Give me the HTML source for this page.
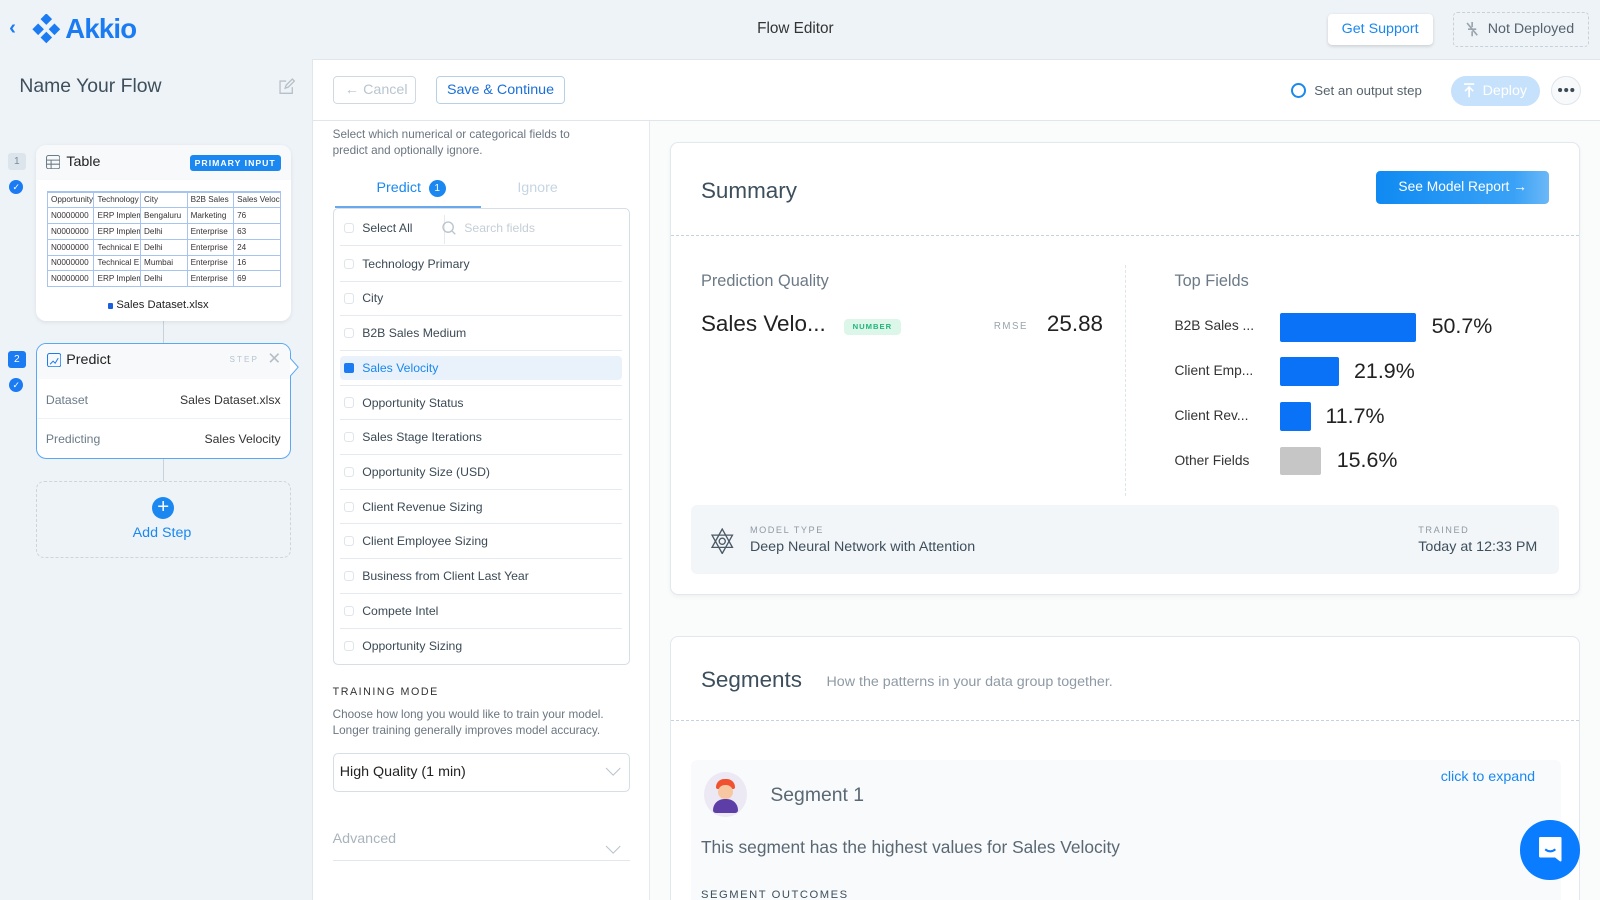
<!DOCTYPE html>
<html><head><meta charset="utf-8"><style>
*{box-sizing:border-box;margin:0;padding:0}
html,body{width:1600px;height:900px;overflow:hidden}
body{font-family:"Liberation Sans",sans-serif;background:#eef3f7;color:#3b4a55}
#w{zoom:1.0204;width:1568px;height:882px;position:relative;overflow:hidden}
.a{position:absolute}
.t{position:absolute;white-space:nowrap;line-height:1}
.row{position:absolute;left:6px;right:6px;height:34px;border-bottom:1px solid #e4eaf0;font-size:12px;color:#3b4a55;display:flex;align-items:center;padding-left:4px}
.cb{width:10px;height:10px;border:1px solid #dfe5ea;border-radius:3px;margin-right:8px}
.mt td{border-right:1px solid #a9c3ef;border-bottom:1px solid #a9c3ef;padding:0 3px;height:15.5px;font-size:8px;color:#333;white-space:nowrap;overflow:hidden;max-width:46px}
</style></head><body><div id="w">
<div class="t" style="left:9px;top:18px;font-size:20px;color:#1a7bf2;font-weight:bold">‹</div>
<svg class="a" style="left:30px;top:14px" width="30" height="30" viewBox="0 0 30 30"><g fill="#1a7bf2"><rect x="11" y="1" width="8" height="8" transform="rotate(45 15 5)"/><rect x="3" y="11" width="8" height="8" transform="rotate(45 7 15)"/><rect x="19" y="11" width="8" height="8" transform="rotate(45 23 15)"/><rect x="11" y="19" width="8" height="8" transform="rotate(45 15 23)"/></g></svg>
<div class="t" style="left:64px;top:15px;font-size:27px;font-weight:bold;color:#1a7bf2;letter-spacing:-0.8px">Akkio</div>
<div class="t" style="left:742px;top:21px;font-size:15px;color:#333">Flow Editor</div>
<div class="a" style="left:1301px;top:14px;width:103px;height:30px;background:#fff;border-radius:4px;box-shadow:0 1px 3px rgba(0,0,0,.15);color:#1a88f0;font-size:14px;text-align:center;line-height:30px">Get Support</div>
<div class="a" style="left:1424px;top:12px;width:133px;height:34px;border:1px dashed #c9d1d8;border-radius:4px;color:#56636d;font-size:14px;line-height:32px;padding-left:33px">Not Deployed</div>
<svg class="a" style="left:1436px;top:21px" width="14" height="16" viewBox="0 0 14 16"><path d="M2 2l10 12M7 1v5M7 10v5M3 8h8" stroke="#9aa4ad" stroke-width="1.6" fill="none"/></svg>
<div class="t" style="left:19px;top:75px;font-size:19px;color:#3d4f5c">Name Your Flow</div>
<svg class="a" style="left:272px;top:76px" width="17" height="17" viewBox="0 0 17 17"><path d="M14 9v6H2V3h6" stroke="#b7c0c8" fill="none" stroke-width="1.3"/><path d="M7 10l1-3 6-6 2 2-6 6z" stroke="#b7c0c8" fill="none" stroke-width="1.3"/></svg>
<div class="a" style="left:8px;top:150px;width:17px;height:17px;background:#dde5ec;border-radius:3px;font-size:10px;color:#7a8a96;text-align:center;line-height:17px">1</div>
<div class="a" style="left:9px;top:176px;width:14px;height:14px;border-radius:50%;background:#1a7bf2;color:#fff;font-size:9px;text-align:center;line-height:14px">✓</div>
<div class="a" style="left:8px;top:344px;width:17px;height:17px;background:#1a7bf2;border-radius:3px;font-size:10px;color:#fff;text-align:center;line-height:17px">2</div>
<div class="a" style="left:9px;top:370px;width:14px;height:14px;border-radius:50%;background:#1a7bf2;color:#fff;font-size:9px;text-align:center;line-height:14px">✓</div>
<div class="a" style="left:160px;top:315px;width:1px;height:21px;background:#c9d2da"></div>
<div class="a" style="left:160px;top:450px;width:1px;height:21px;background:#c9d2da"></div>
<div class="a" style="left:35px;top:142px;width:250px;height:173px;background:#fff;border-radius:10px;box-shadow:0 1px 4px rgba(0,0,0,.08);overflow:hidden">
 <div class="a" style="left:0;top:0;width:250px;height:34px;background:#f7f9fb"></div>
 <svg class="a" style="left:10px;top:10px" width="14" height="14" viewBox="0 0 14 14"><rect x=".5" y=".5" width="13" height="13" rx="2" stroke="#6b7b88" fill="none"/><path d="M0 5h14M0 9h14M5 5v9" stroke="#6b7b88"/></svg>
 <div class="t" style="left:30px;top:10px;font-size:14px;color:#222">Table</div>
 <div class="a" style="left:151px;top:10px;width:89px;height:16px;background:#1a88f0;border-radius:3px;color:#fff;font-size:8.5px;font-weight:bold;letter-spacing:1px;text-align:center;line-height:16px">PRIMARY INPUT</div>
 <table class="a mt" style="left:11px;top:45px;width:229px;border-collapse:collapse;border-top:2px solid #a9c3ef;border-left:1px solid #a9c3ef;table-layout:fixed">
 <tr><td>Opportunity</td><td>Technology</td><td>City</td><td>B2B Sales</td><td>Sales Veloc</td></tr>
 <tr><td>N0000000</td><td>ERP Implem</td><td>Bengaluru</td><td>Marketing</td><td>76</td></tr>
 <tr><td>N0000000</td><td>ERP Implem</td><td>Delhi</td><td>Enterprise</td><td>63</td></tr>
 <tr><td>N0000000</td><td>Technical E</td><td>Delhi</td><td>Enterprise</td><td>24</td></tr>
 <tr><td>N0000000</td><td>Technical E</td><td>Mumbai</td><td>Enterprise</td><td>16</td></tr>
 <tr><td>N0000000</td><td>ERP Implem</td><td>Delhi</td><td>Enterprise</td><td>69</td></tr></table>
 <div class="a" style="left:71px;top:155px;width:5px;height:6px;background:#1a5fe0;border-radius:1px"></div>
 <div class="t" style="left:79px;top:152px;font-size:11px;color:#222">Sales Dataset.xlsx</div>
</div>
<div class="a" style="left:35px;top:336px;width:250px;height:114px;background:#fff;border:1px solid #5aa7f5;border-radius:10px;overflow:hidden">
 <div class="a" style="left:0;top:0;width:250px;height:34px;background:#f7f9fb"></div>
 <svg class="a" style="left:10px;top:9px" width="14" height="14" viewBox="0 0 14 14"><rect x=".5" y=".5" width="13" height="13" rx="2" stroke="#1a7bf2" fill="none"/><path d="M3 11l3-3 2 2 3-5" stroke="#1a7bf2" fill="none"/></svg>
 <div class="t" style="left:29px;top:9px;font-size:14px;color:#222">Predict</div>
 <div class="t" style="left:189px;top:12px;font-size:8px;color:#b5c4cf;letter-spacing:2px">STEP</div>
 <div class="t" style="left:226px;top:7px;font-size:16px;color:#b5bec6">✕</div>
 <div class="a" style="left:0;top:73px;width:250px;height:1px;background:#eef2f5"></div>
 <div class="t" style="left:9px;top:49px;font-size:12px;color:#6b7b88">Dataset</div>
 <div class="t" style="right:9px;top:49px;font-size:12px;color:#333">Sales Dataset.xlsx</div>
 <div class="t" style="left:9px;top:87px;font-size:12px;color:#6b7b88">Predicting</div>
 <div class="t" style="right:9px;top:87px;font-size:12px;color:#333">Sales Velocity</div>
</div>
<svg class="a" style="left:284px;top:351px" width="9" height="18"><path d="M0 0l8 9-8 9" fill="#fff" stroke="#5aa7f5"/></svg>
<div class="a" style="left:35px;top:471px;width:250px;height:76px;border:1.5px dashed #cdd5dc;border-radius:8px"></div>
<div class="a" style="left:149px;top:487px;width:22px;height:22px;border-radius:50%;background:#1a88f0;color:#fff;font-size:20px;text-align:center;line-height:21px">+</div>
<div class="t" style="left:130px;top:515px;font-size:14px;color:#1a88f0">Add Step</div>
<div class="a" style="left:306px;top:58px;width:1262px;height:824px;background:#fafcfc;border-top:1px solid #dfe6ec;border-left:1px solid #dfe6ec"></div>
<div class="a" style="left:307px;top:59px;width:1261px;height:60px;background:#fff;border-bottom:1px solid #dfe6ec"></div>
<div class="a" style="left:307px;top:119px;width:330px;height:763px;background:#fff;border-right:1px solid #e4eaf0"></div>
<div class="a" style="left:326px;top:74px;width:82px;height:28px;border:1px solid #cfd9e2;border-radius:4px;color:#b9c5cf;font-size:14px;line-height:26px;padding-left:11px">← Cancel</div>
<div class="a" style="left:427px;top:74px;width:127px;height:28px;border:1px solid #b8cfe6;border-radius:4px;color:#1a6fd8;font-size:14px;line-height:26px;text-align:center">Save &amp; Continue</div>
<div class="a" style="left:1265px;top:81px;width:15px;height:15px;border:2px solid #1a88f0;border-radius:50%"></div>
<div class="t" style="left:1288px;top:82px;font-size:13px;color:#56636d">Set an output step</div>
<div class="a" style="left:1422px;top:74px;width:87px;height:30px;background:#c6e1fb;border-radius:15px;color:#fff;font-size:14px;line-height:30px;padding-left:31px">Deploy</div>
<svg class="a" style="left:1434px;top:81px" width="12" height="15"><path d="M1 1h10M6 14V4M2 8l4-4 4 4" stroke="#fff" stroke-width="1.6" fill="none"/></svg>
<div class="a" style="left:1520px;top:74px;width:29px;height:29px;border:1px solid #dfe6ec;border-radius:50%;background:#f7f9fb"></div>
<svg class="a" style="left:1525px;top:85px" width="20" height="6"><circle cx="4" cy="3" r="2" fill="#3b4a55"/><circle cx="10" cy="3" r="2" fill="#3b4a55"/><circle cx="16" cy="3" r="2" fill="#3b4a55"/></svg>
<div class="t" style="left:326px;top:124px;font-size:11.5px;color:#6b7680;line-height:16px">Select which numerical or categorical fields to<br>predict and optionally ignore.</div>
<div class="t" style="left:369px;top:177px;font-size:14px;color:#1a88f0">Predict</div>
<div class="a" style="left:420px;top:176px;width:17px;height:17px;border-radius:50%;background:#1a88f0;color:#fff;font-size:10px;text-align:center;line-height:17px">1</div>
<div class="t" style="left:507px;top:177px;font-size:14px;color:#c5d5e3">Ignore</div>
<div class="a" style="left:328px;top:202px;width:143px;height:2px;background:#6aa8ee"></div>
<div class="a" style="left:326px;top:204px;width:291px;height:448px;border:1px solid #d6dee6;border-radius:5px;background:#fff">
 <div class="row" style="top:2px;border-bottom:1px solid #e4eaf0"><span class="cb"></span>Select All<span style="position:absolute;left:102px;top:4px;width:1px;height:28px;background:#e4eaf0"></span><svg style="position:absolute;left:100px;top:10px" width="14" height="14"><circle cx="6" cy="6" r="5" stroke="#b8c3cc" fill="none" stroke-width="1.3"/><path d="M10 10l3 3" stroke="#b8c3cc" stroke-width="1.3"/></svg><span style="position:absolute;left:122px;color:#c5ced6">Search fields</span></div>
 <div class="row" style="top:37px"><span class="cb"></span>Technology Primary</div>
 <div class="row" style="top:71px"><span class="cb"></span>City</div>
 <div class="row" style="top:105px"><span class="cb"></span>B2B Sales Medium</div>
 <div class="row" style="top:139px"><div style="position:absolute;left:0;right:0;top:5px;height:23px;background:#e9f1fb;border-radius:4px"></div><span class="cb" style="position:relative;background:#1a7bf2;border-color:#1a7bf2;border-radius:2px"></span><span style="position:relative;color:#1a88f0">Sales Velocity</span></div>
 <div class="row" style="top:173px"><span class="cb"></span>Opportunity Status</div>
 <div class="row" style="top:207px"><span class="cb"></span>Sales Stage Iterations</div>
 <div class="row" style="top:241px"><span class="cb"></span>Opportunity Size (USD)</div>
 <div class="row" style="top:275px"><span class="cb"></span>Client Revenue Sizing</div>
 <div class="row" style="top:309px"><span class="cb"></span>Client Employee Sizing</div>
 <div class="row" style="top:343px"><span class="cb"></span>Business from Client Last Year</div>
 <div class="row" style="top:377px"><span class="cb"></span>Compete Intel</div>
 <div class="row" style="top:411px;border:none"><span class="cb"></span>Opportunity Sizing</div>
</div>
<div class="t" style="left:326px;top:673px;font-size:10.5px;color:#333;letter-spacing:1.5px">TRAINING MODE</div>
<div class="t" style="left:326px;top:693px;font-size:11.5px;color:#6b7680;line-height:16px">Choose how long you would like to train your model.<br>Longer training generally improves model accuracy.</div>
<div class="a" style="left:326px;top:738px;width:291px;height:38px;border:1px solid #d6dee6;border-radius:5px;font-size:14px;color:#222;line-height:36px;padding-left:6px">High Quality (1 min)</div>
<svg class="a" style="left:593px;top:752px" width="16" height="9"><path d="M1 1l7 7 7-7" stroke="#b8c4ce" fill="none"/></svg>
<div class="t" style="left:326px;top:815px;font-size:14px;color:#a9b3bb">Advanced</div>
<svg class="a" style="left:593px;top:828px" width="16" height="9"><path d="M1 1l7 7 7-7" stroke="#b8c4ce" fill="none"/></svg>
<div class="a" style="left:326px;top:843px;width:291px;height:1px;background:#e1e7ec"></div>
<div class="a" style="left:657px;top:139px;width:891px;height:444px;background:#fff;border:1px solid #e1e8ee;border-radius:8px;box-shadow:0 2px 4px rgba(0,0,0,.04)">
 <div class="t" style="left:29px;top:36px;font-size:22px;color:#3d4f5c">Summary</div>
 <div class="a" style="left:691px;top:28px;width:169px;height:32px;border-radius:4px;background:linear-gradient(90deg,#0f8af2,#3aa2f6 80%,#6bb8f7);color:#fff;font-size:13.5px;text-align:center;line-height:32px">See Model Report →</div>
 <div class="a" style="left:0;top:90px;width:889px;border-top:1px dashed #c4d4df"></div>
 <div class="t" style="left:29px;top:128px;font-size:16px;color:#6b7a86">Prediction Quality</div>
 <div class="t" style="left:29px;top:167px;font-size:22px;color:#222">Sales Velo...</div>
 <div class="a" style="left:169px;top:173px;width:56px;height:15px;background:#dcf6ea;border-radius:4px;color:#22b57a;font-size:7.5px;font-weight:bold;letter-spacing:1px;text-align:center;line-height:15px">NUMBER</div>
 <div class="t" style="left:316px;top:176px;font-size:9.5px;color:#98a3ac;letter-spacing:1.5px">RMSE</div>
 <div class="t" style="left:368px;top:167px;font-size:22px;color:#222">25.88</div>
 <div class="a" style="left:445px;top:120px;height:226px;border-left:1px dashed #dce5ec"></div>
 <div class="t" style="left:493px;top:128px;font-size:16px;color:#6b7a86">Top Fields</div>
 <div class="t" style="left:493px;top:173px;font-size:13.5px;color:#333">B2B Sales ...</div>
 <div class="a" style="left:596px;top:167px;width:134px;height:28px;background:#0a72f7;border-radius:2px"></div>
 <div class="t" style="left:745px;top:170px;font-size:21px;color:#222">50.7%</div>
 <div class="t" style="left:493px;top:217px;font-size:13.5px;color:#333">Client Emp...</div>
 <div class="a" style="left:596px;top:210px;width:58px;height:28px;background:#0a72f7;border-radius:2px"></div>
 <div class="t" style="left:669px;top:214px;font-size:21px;color:#222">21.9%</div>
 <div class="t" style="left:493px;top:261px;font-size:13.5px;color:#333">Client Rev...</div>
 <div class="a" style="left:596px;top:254px;width:31px;height:28px;background:#0a72f7;border-radius:2px"></div>
 <div class="t" style="left:641px;top:258px;font-size:21px;color:#222">11.7%</div>
 <div class="t" style="left:493px;top:305px;font-size:13.5px;color:#333">Other Fields</div>
 <div class="a" style="left:596px;top:298px;width:41px;height:28px;background:#c6c6c6;border-radius:2px"></div>
 <div class="t" style="left:652px;top:301px;font-size:21px;color:#222">15.6%</div>
 <div class="a" style="left:19px;top:355px;width:851px;height:68px;background:#f3f6f8;border-radius:6px">
  <svg class="a" style="left:19px;top:22px" width="24" height="26" viewBox="0 0 24 26"><g stroke="#4a5a66" fill="none" stroke-width="1.3"><path d="M12 1L22 19H2z"/><path d="M12 25L2 7h20z"/><circle cx="12" cy="13" r="3"/></g></svg>
  <div class="t" style="left:58px;top:21px;font-size:9px;color:#8e9aa4;letter-spacing:1.5px">MODEL TYPE</div>
  <div class="t" style="left:58px;top:34px;font-size:14px;color:#3d4f5c">Deep Neural Network with Attention</div>
  <div class="t" style="left:713px;top:21px;font-size:9px;color:#8e9aa4;letter-spacing:1.5px">TRAINED</div>
  <div class="t" style="left:713px;top:34px;font-size:14px;color:#3d4f5c">Today at 12:33 PM</div>
 </div>
</div>
<div class="a" style="left:657px;top:623px;width:891px;height:259px;background:#fff;border:1px solid #e1e8ee;border-bottom:none;border-radius:8px 8px 0 0;overflow:hidden">
 <div class="t" style="left:29px;top:32px;font-size:22px;color:#3d4f5c">Segments</div>
 <div class="t" style="left:152px;top:38px;font-size:14px;color:#8e9aa4">How the patterns in your data group together.</div>
 <div class="a" style="left:0;top:82px;width:889px;border-top:1px dashed #c4d4df"></div>
 <div class="a" style="left:19px;top:121px;width:853px;height:200px;background:#f8fafc;border-radius:6px">
  <div class="a" style="left:13px;top:12px;width:42px;height:44px;border-radius:50%;background:#ece8f4"></div>
  <div class="a" style="left:25px;top:18px;width:18px;height:10px;border-radius:9px 9px 2px 2px;background:#f0522f"></div>
  <div class="a" style="left:27px;top:24px;width:14px;height:14px;border-radius:50%;background:#f6c7a1"></div>
  <div class="a" style="left:22px;top:38px;width:24px;height:14px;border-radius:12px 12px 3px 3px;background:#5d3ea7"></div>
  <div class="t" style="left:78px;top:25px;font-size:19px;color:#5a6873">Segment 1</div>
  <div class="t" style="left:735px;top:10px;font-size:14px;color:#1a88f0">click to expand</div>
  <div class="t" style="left:10px;top:77px;font-size:17px;color:#5a6873">This segment has the highest values for Sales Velocity</div>
  <div class="t" style="left:10px;top:127px;font-size:11px;color:#3d4f5c;letter-spacing:1.5px">SEGMENT OUTCOMES</div>
 </div>
</div>
<div class="a" style="left:1490px;top:804px;width:58px;height:58px;border-radius:50%;background:#0a7cff"></div>
<svg class="a" style="left:1505px;top:818px" width="28" height="30" viewBox="0 0 28 30"><path d="M4 3h20v22l-5-4H4z" fill="#fff" stroke="#fff" stroke-linejoin="round" stroke-width="2"/><path d="M9 14q5 4 10 0" stroke="#0a7cff" stroke-width="2" fill="none"/></svg>
</div></body></html>
